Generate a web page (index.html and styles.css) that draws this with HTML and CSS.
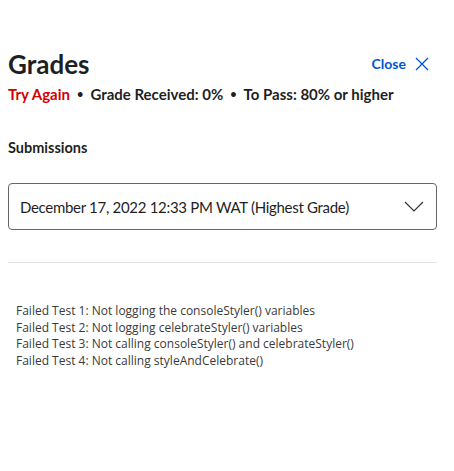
FILE: index.html
```html
<!DOCTYPE html>
<html lang="en">
<head>
<meta charset="utf-8">
<title>Grades</title>
<link rel="stylesheet" href="styles.css">
</head>
<body>
<div class="panel">
  <header class="head">
    <h1 class="title">Grades</h1>
    <button class="close" type="button">
      <span class="close-label">Close</span>
      <svg class="close-icon" width="14" height="14" viewBox="0 0 14 14" aria-hidden="true">
        <path d="M1 1 L13 13 M13 1 L1 13" stroke="#0056d2" stroke-width="1.3" fill="none"/>
      </svg>
    </button>
  </header>
  <div class="status">
    <span class="fail">Try Again</span>
    <span class="dot">•</span>
    <span>Grade Received: 0%</span>
    <span class="dot">•</span>
    <span>To Pass: 80% or higher</span>
  </div>
  <h2 class="sub">Submissions</h2>
  <div class="select">
    <span class="select-text">December 17, 2022 12:33 PM WAT (Highest Grade)</span>
    <svg class="chev" width="20" height="11" viewBox="0 0 20 11" aria-hidden="true">
      <path d="M1 1 L10 10 L19 1" stroke="#333" stroke-width="1.2" fill="none"/>
    </svg>
  </div>
  <hr class="rule">
  <div class="feedback">
    <div>Failed Test 1: Not logging the consoleStyler() variables</div>
    <div>Failed Test 2: Not logging celebrateStyler() variables</div>
    <div>Failed Test 3: Not calling consoleStyler() and celebrateStyler()</div>
    <div>Failed Test 4: Not calling styleAndCelebrate()</div>
  </div>
</div>
</body>
</html>
```

FILE: styles.css
```css
* { box-sizing: border-box; }
html, body { margin: 0; padding: 0; background: #fff; }
body { font-family: "Lato", "Noto Sans", sans-serif; color: #1f1f1f; }
.panel { padding: 0 17px 0 8px; width: 454px; }
.head {
  display: flex;
  justify-content: space-between;
  align-items: center;
  padding-top: 48px;
  height: 79px;
}
.title { margin: 0; font-size: 26px; font-weight: 700; line-height: 30px; letter-spacing: 0; }
.close {
  display: flex; align-items: center; gap: 9px;
  background: none; border: 0; padding: 0; margin-right: 8px;
  font-family: inherit; font-size: 14px; font-weight: 700; color: #0056d2;
  cursor: pointer;
}
.close-icon { display: block; }
.status {
  display: flex; align-items: center; gap: 7px;
  font-size: 15px; font-weight: 700; line-height: 18px;
  margin-top: 6px;
}
.fail { color: #d30001; }
.dot { font-size: 11px; }
.sub { margin: 36px 0 0; font-size: 14.5px; font-weight: 700; line-height: 18px; }
.select {
  margin-top: 26px;
  height: 47px;
  border: 1px solid #666;
  border-radius: 4px;
  display: flex; align-items: center; justify-content: space-between;
  padding: 0 12px 0 11px;
}
.select-text { font-size: 15px; letter-spacing: -0.3px; font-weight: 400; color: #1f1f1f; }
.chev { display: block; }
.rule { border: 0; border-top: 1px solid #e5e5e5; margin: 32px 0 0; }
.feedback {
  margin-top: 40px; padding-left: 8px;
  font-family: "Open Sans", sans-serif; font-size: 12px; line-height: 16.5px; color: #3a3a3a;
}
```
